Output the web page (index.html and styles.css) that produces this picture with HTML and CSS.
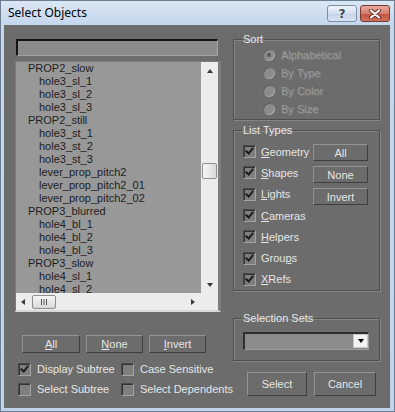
FILE: index.html
```html
<!DOCTYPE html>
<html lang="en">

<head>
    <meta charset="UTF-8">
    <title>Select Objects</title>
    <link rel="stylesheet" href="styles.css">
</head>

<body>

    <div class="window">
        <div class="titlebar">
            <span class="title">Select Objects</span>
            <div class="caption-btns">
                <span class="cap-btn help">?</span>
                <span class="cap-btn close">
                    <svg width="14" height="10" viewBox="0 0 14 10">
                        <path d="M3 1.5 L11 8.5 M11 1.5 L3 8.5" stroke="#6b2a22" stroke-width="4" stroke-linecap="round" />
                        <path d="M3 1.5 L11 8.5 M11 1.5 L3 8.5" stroke="#fff" stroke-width="2.2" stroke-linecap="round" />
                    </svg>
                </span>
            </div>
        </div>

        <div class="client">
            <div class="col-left">
                <div class="search"></div>

                <div class="listbox">
                    <ul class="items">
                        <li>PROP2_slow</li>
                        <li class="child">hole3_sl_1</li>
                        <li class="child">hole3_sl_2</li>
                        <li class="child">hole3_sl_3</li>
                        <li>PROP2_still</li>
                        <li class="child">hole3_st_1</li>
                        <li class="child">hole3_st_2</li>
                        <li class="child">hole3_st_3</li>
                        <li class="child">lever_prop_pitch2</li>
                        <li class="child">lever_prop_pitch2_01</li>
                        <li class="child">lever_prop_pitch2_02</li>
                        <li>PROP3_blurred</li>
                        <li class="child">hole4_bl_1</li>
                        <li class="child">hole4_bl_2</li>
                        <li class="child">hole4_bl_3</li>
                        <li>PROP3_slow</li>
                        <li class="child">hole4_sl_1</li>
                        <li class="child">hole4_sl_2</li>
                    </ul>
                    <div class="vscroll">
                        <span class="arrow arrow-up"></span>
                        <span class="vthumb"></span>
                        <span class="arrow arrow-down"></span>
                    </div>
                    <div class="hscroll">
                        <span class="arrow arrow-left"></span>
                        <span class="hthumb">
                            <svg width="8" height="6" viewBox="0 0 8 6">
                                <path d="M1.5 0 V6 M4 0 V6 M6.5 0 V6" stroke="#555" stroke-width="1" />
                            </svg>
                        </span>
                        <span class="arrow arrow-right"></span>
                    </div>
                    <div class="corner"></div>
                </div>

                <div class="btn-row">
                    <button class="btn w58"><u>A</u>ll</button>
                    <button class="btn w57"><u>N</u>one</button>
                    <button class="btn w57"><u>I</u>nvert</button>
                </div>

                <div class="opts">
                    <label class="chk-row"><span class="chk checked"></span><span>Display Subtree</span></label>
                    <label class="chk-row"><span class="chk"></span><span>Case Sensitive</span></label>
                    <label class="chk-row"><span class="chk"></span><span>Select Subtree</span></label>
                    <label class="chk-row"><span class="chk"></span><span>Select Dependents</span></label>
                </div>
            </div>

            <div class="col-right">
                <fieldset class="group sort">
                    <legend>Sort</legend>
                    <div class="radio-row"><span class="radio on"></span><span>Alphabetical</span></div>
                    <div class="radio-row"><span class="radio"></span><span>By Type</span></div>
                    <div class="radio-row"><span class="radio"></span><span>By Color</span></div>
                    <div class="radio-row"><span class="radio"></span><span>By Size</span></div>
                </fieldset>

                <fieldset class="group types">
                    <legend>List Types</legend>
                    <div class="types-body">
                        <div class="type-list">
                            <label class="chk-row"><span class="chk checked"></span><span><u>G</u>eometry</span></label>
                            <label class="chk-row"><span class="chk checked"></span><span><u>S</u>hapes</span></label>
                            <label class="chk-row"><span class="chk checked"></span><span><u>L</u>ights</span></label>
                            <label class="chk-row"><span class="chk checked"></span><span><u>C</u>ameras</span></label>
                            <label class="chk-row"><span class="chk checked"></span><span><u>H</u>elpers</span></label>
                            <label class="chk-row"><span class="chk checked"></span><span>Grou<u>p</u>s</span></label>
                            <label class="chk-row"><span class="chk checked"></span><span><u>X</u>Refs</span></label>
                        </div>
                        <div class="type-btns">
                            <button class="btn small">All</button>
                            <button class="btn small">None</button>
                            <button class="btn small">Invert</button>
                        </div>
                    </div>
                </fieldset>

                <fieldset class="group sets">
                    <legend>Selection Sets</legend>
                    <div class="dropdown">
                        <span class="drop-btn"><span class="arrow arrow-down dark"></span></span>
                    </div>
                </fieldset>

                <div class="dlg-btns">
                    <button class="btn big w60">Select</button>
                    <button class="btn big w62">Cancel</button>
                </div>
            </div>
        </div>
    </div>

</body>

</html>
```

FILE: styles.css
```css
body {
    margin: 0;
    padding: 0;
    background-color: #fff;
    font-family: 'Liberation Sans', Arial, sans-serif;
    font-size: 11px;
}

.window {
    width: 395px;
    height: 412px;
    box-sizing: border-box;
    border: 1px solid #6d7e93;
    background: linear-gradient(#dae6f4, #c4d7ed 24px, #bfd3ea);
    display: flex;
    flex-direction: column;
    overflow: hidden;
}

/* title bar */
.titlebar {
    flex: none;
    height: 24px;
    display: flex;
    align-items: center;
    padding-left: 7px;
}

.title {
    font-family: 'Noto Sans', sans-serif;
    font-size: 12px;
    color: #000;
    margin-top: -1px;
}

.caption-btns {
    margin-left: auto;
    margin-right: 4px;
    display: flex;
    gap: 3px;
    align-self: flex-start;
    margin-top: 4px;
}

.cap-btn {
    width: 30px;
    height: 17px;
    box-sizing: border-box;
    border-radius: 3px;
    display: flex;
    align-items: center;
    justify-content: center;
}

.help {
    border: 1px solid #7d8fa7;
    background: linear-gradient(#eef3f9, #d3dfee 50%, #c2d3e8 51%, #d7e3f1);
    color: #3a4450;
    font-family: 'DejaVu Sans', sans-serif;
    font-size: 12px;
    font-weight: bold;
    text-shadow: 0 0 2px #fff;
}

.close {
    border: 1px solid #7a3a32;
    background: linear-gradient(#e9a99c, #d47f6e 50%, #c3523f 51%, #d0735f);
}

/* client area */
.client {
    flex: 1;
    min-height: 0;
    margin: 0 4px 3px 3px;
    background-color: #6c6c6c;
    display: flex;
    gap: 12px;
    padding-left: 11px;
    color: #e6e6e6;
    overflow: hidden;
}

.col-left {
    width: 206px;
    padding-top: 14px;
    display: flex;
    flex-direction: column;
}

.search {
    margin-left: 1px;
    width: 202px;
    height: 17px;
    box-sizing: border-box;
    background-color: #8c8c8c;
    border-style: solid;
    border-width: 2px 1px 1px 2px;
    border-color: #141414 #a4a4a4 #a4a4a4 #141414;
}

.listbox {
    margin-top: 5px;
    height: 251px;
    box-sizing: border-box;
    border-style: solid;
    border-width: 1px 3px 2px 1px;
    border-color: #7b7b7b #7d7d7d #d8d8d8 #7b7b7b;
    background-color: #989898;
    display: grid;
    grid-template-columns: 1fr 17px;
    grid-template-rows: 1fr 17px;
}

.items {
    list-style: none;
    margin: 0;
    padding: 0;
    overflow: hidden;
    color: #1e1e1e;
    line-height: 13px;
}

.items li {
    height: 13px;
    padding-left: 12px;
    white-space: nowrap;
}

.items li.child {
    padding-left: 23px;
}

/* scrollbars */
.vscroll {
    background-color: #ececec;
    display: flex;
    flex-direction: column;
    align-items: center;
    padding: 7px 0 6px;
}

.vthumb {
    margin-top: 90px;
    width: 15px;
    height: 16px;
    box-sizing: border-box;
    border: 1px solid #8f8f8f;
    border-radius: 2px;
    background: linear-gradient(90deg, #f6f6f6, #d9d9d9);
}

.vscroll .arrow-down {
    margin-top: auto;
}

.hscroll {
    background-color: #ececec;
    display: flex;
    align-items: center;
    padding: 0 6px 0 5px;
}

.hthumb {
    margin-left: 7px;
    width: 24px;
    height: 14px;
    box-sizing: border-box;
    border: 1px solid #8f8f8f;
    border-radius: 2px;
    background: linear-gradient(#f6f6f6, #d9d9d9);
    display: flex;
    align-items: center;
    justify-content: center;
}

.hscroll .arrow-right {
    margin-left: auto;
}

.corner {
    background-color: #ececec;
}

.arrow {
    width: 0;
    height: 0;
    border-style: solid;
    border-color: transparent;
}

.arrow-up {
    border-width: 0 3.5px 4px;
    border-bottom-color: #3a3a3a;
}

.arrow-down {
    border-width: 4px 3.5px 0;
    border-top-color: #3a3a3a;
}

.arrow-left {
    border-width: 3.5px 4px 3.5px 0;
    border-right-color: #3a3a3a;
}

.arrow-right {
    border-width: 3.5px 0 3.5px 4px;
    border-left-color: #3a3a3a;
}

.arrow.dark {
    border-top-color: #000;
}

/* buttons */
.btn {
    height: 18px;
    box-sizing: border-box;
    padding: 0;
    background-color: #6c6c6c;
    border: 1px solid;
    border-color: #939393 #3f3f3f #3f3f3f #939393;
    color: #e6e6e6;
    font-family: 'Liberation Sans', Arial, sans-serif;
    font-size: 11px;
}

.w57 { width: 57px; }
.w58 { width: 58px; }
.w60 { width: 60px; }
.w62 { width: 62px; }

.btn-row {
    margin-top: 23px;
    padding-left: 7px;
    display: flex;
    gap: 6px;
}

.opts {
    margin-top: 6px;
    padding-left: 3px;
    display: grid;
    grid-template-columns: 103px 1fr;
    grid-auto-rows: 20px;
}

.chk-row {
    display: flex;
    align-items: center;
    gap: 6px;
    white-space: nowrap;
}

.chk {
    width: 13px;
    height: 13px;
    box-sizing: border-box;
    border: 1px solid;
    border-color: #4a4a4a #a2a2a2 #a2a2a2 #4a4a4a;
    box-shadow: inset 1px 1px 0 #333;
    background-color: #7f7f7f;
    flex: none;
    position: relative;
}

.chk.checked::after {
    content: "";
    position: absolute;
    left: 3px;
    top: 0px;
    width: 3px;
    height: 6px;
    border: solid #1c1c1c;
    border-width: 0 2px 2px 0;
    transform: rotate(40deg);
}

/* right column */
.col-right {
    width: 147px;
    padding-top: 7px;
    display: flex;
    flex-direction: column;
}

.group {
    margin: 0;
    padding: 0 8px;
    border: 1px solid #4e4e4e;
    box-shadow: 1px 1px 0 #858585, inset 1px 1px 0 #858585;
    min-width: 0;
}

.group legend {
    padding: 0 1px;
    line-height: 14px;
    color: #e8e8e8;
}

.sort {
    padding-bottom: 1px;
}

.radio-row {
    height: 18px;
    display: flex;
    align-items: center;
    gap: 6px;
    padding-left: 21px;
    color: #9a9a9a;
    text-shadow: 1px 1px 0 #7c7c7c;
}

.radio {
    width: 12px;
    height: 12px;
    box-sizing: border-box;
    border-radius: 50%;
    background-color: #8c8c8c;
    box-shadow: inset 1px 1px 0 #5e5e5e, inset -1px -1px 0 #a4a4a4;
    display: flex;
    align-items: center;
    justify-content: center;
}

.radio.on::after {
    content: "";
    width: 4px;
    height: 4px;
    border-radius: 50%;
    background-color: #555;
}

.types {
    margin-top: 3px;
    padding-top: 4px;
}

.types-body {
    display: flex;
}

.type-list {
    display: grid;
    grid-auto-rows: 21.3px;
    padding-left: 1px;
}

.type-list .chk-row {
    gap: 5px;
}

.type-btns {
    margin-left: auto;
    margin-right: 3px;
    margin-top: 3px;
    display: flex;
    flex-direction: column;
    gap: 5px;
}

.btn.small {
    width: 55px;
    height: 17px;
}

.sets {
    margin-top: 20px;
    padding-bottom: 10px;
}

.dropdown {
    margin-top: 7px;
    margin-left: 1px;
    width: 126px;
    height: 18px;
    box-sizing: border-box;
    border-style: solid;
    border-width: 2px 1px 1px 2px;
    border-color: #2e2e2e #9a9a9a #9a9a9a #2e2e2e;
    background-color: #8b8b8b;
    display: flex;
    justify-content: flex-end;
}

.drop-btn {
    width: 15px;
    height: 14px;
    box-sizing: border-box;
    background-color: #f2f2f2;
    border: 1px solid #c8c8c8;
    display: flex;
    align-items: center;
    justify-content: center;
}

.dlg-btns {
    margin-top: 11px;
    padding-left: 14px;
    display: flex;
    gap: 7px;
}

.btn.big {
    height: 24px;
}
```
